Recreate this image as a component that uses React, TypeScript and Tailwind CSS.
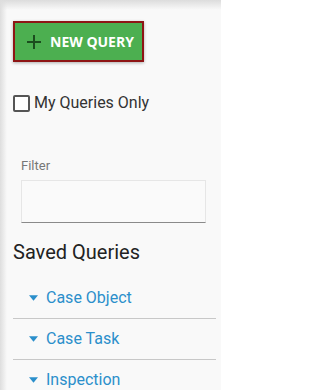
import { useState } from "react"

function PlusIcon() {
    return (
        <svg className="h-[16px] w-[16px]" viewBox="0 0 16 16">
            <path d="M8 1v14M1 8h14" stroke="#1b4d1e" strokeWidth="2" fill="none" />
        </svg>
    )
}

function Caret() {
    return (
        <svg className="h-[6px] w-[9px]" viewBox="0 0 10 6">
            <path d="M0 0h10L5 6z" fill="#2b8fcb" />
        </svg>
    )
}

const queries = ["Case Object", "Case Task", "Inspection"]

export default function App() {
    const [mine, setMine] = useState(false)
    const [filter, setFilter] = useState("")

    return (
        <div className="relative h-[390px] w-[221px] overflow-hidden bg-[#f9f9f9] font-['Roboto',sans-serif] text-[#333]">
            {/* edge shadows */}
            <div className="pointer-events-none absolute inset-x-0 top-0 h-[10px] bg-gradient-to-b from-[#dcdcdc] to-transparent" />
            <div className="pointer-events-none absolute inset-y-0 left-0 w-[7px] bg-gradient-to-r from-[#dedede] to-transparent" />

            <div className="flex flex-col pl-[13px] pt-[21px]">
                <button className="flex h-[41px] w-[131px] items-center gap-[8px] border-2 border-[#8e1515] bg-[#4caf50] pl-[11px] shadow-[0_1px_3px_rgba(0,0,0,0.3)]">
                    <PlusIcon />
                    <span className="font-['Open_Sans',sans-serif] text-[14px] font-bold text-white">NEW QUERY</span>
                </button>

                <label className="mt-[31px] flex h-[20px] items-center gap-[4px]">
                    <span
                        onClick={() => setMine(!mine)}
                        className="h-[17px] w-[17px] rounded-[2px] border-2 border-[#555] bg-white"
                    />
                    <span className="text-[16px] leading-[20px] text-[#333]">My Queries Only</span>
                </label>

                <div className="ml-[8px] mt-[43px] flex w-[185px] flex-col">
                    <span className="text-[13px] text-[#777]">Filter</span>
                    <input
                        value={filter}
                        onChange={(e) => setFilter(e.target.value)}
                        className="mt-[4px] h-[43px] border border-b-[#8a8a8a] border-[#e6e6e6] bg-[#fafafa] px-2 text-sm outline-none"
                    />
                </div>

                <h2 className="mt-[17px] text-[20px] leading-[24px] text-[#222]">Saved Queries</h2>

                <ul className="mt-[14px] mr-[5px] flex flex-col">
                    {queries.map((q, i) => (
                        <li
                            key={q}
                            className={
                                "flex h-[41px] items-center gap-[8px] pl-[16px] " +
                                (i < queries.length - 1 ? "border-b border-[#c8c8c8]" : "")
                            }
                        >
                            <Caret />
                            <span className="text-[16px] leading-[20px] text-[#2b8fcb]">{q}</span>
                        </li>
                    ))}
                </ul>
            </div>
        </div>
    )
}
